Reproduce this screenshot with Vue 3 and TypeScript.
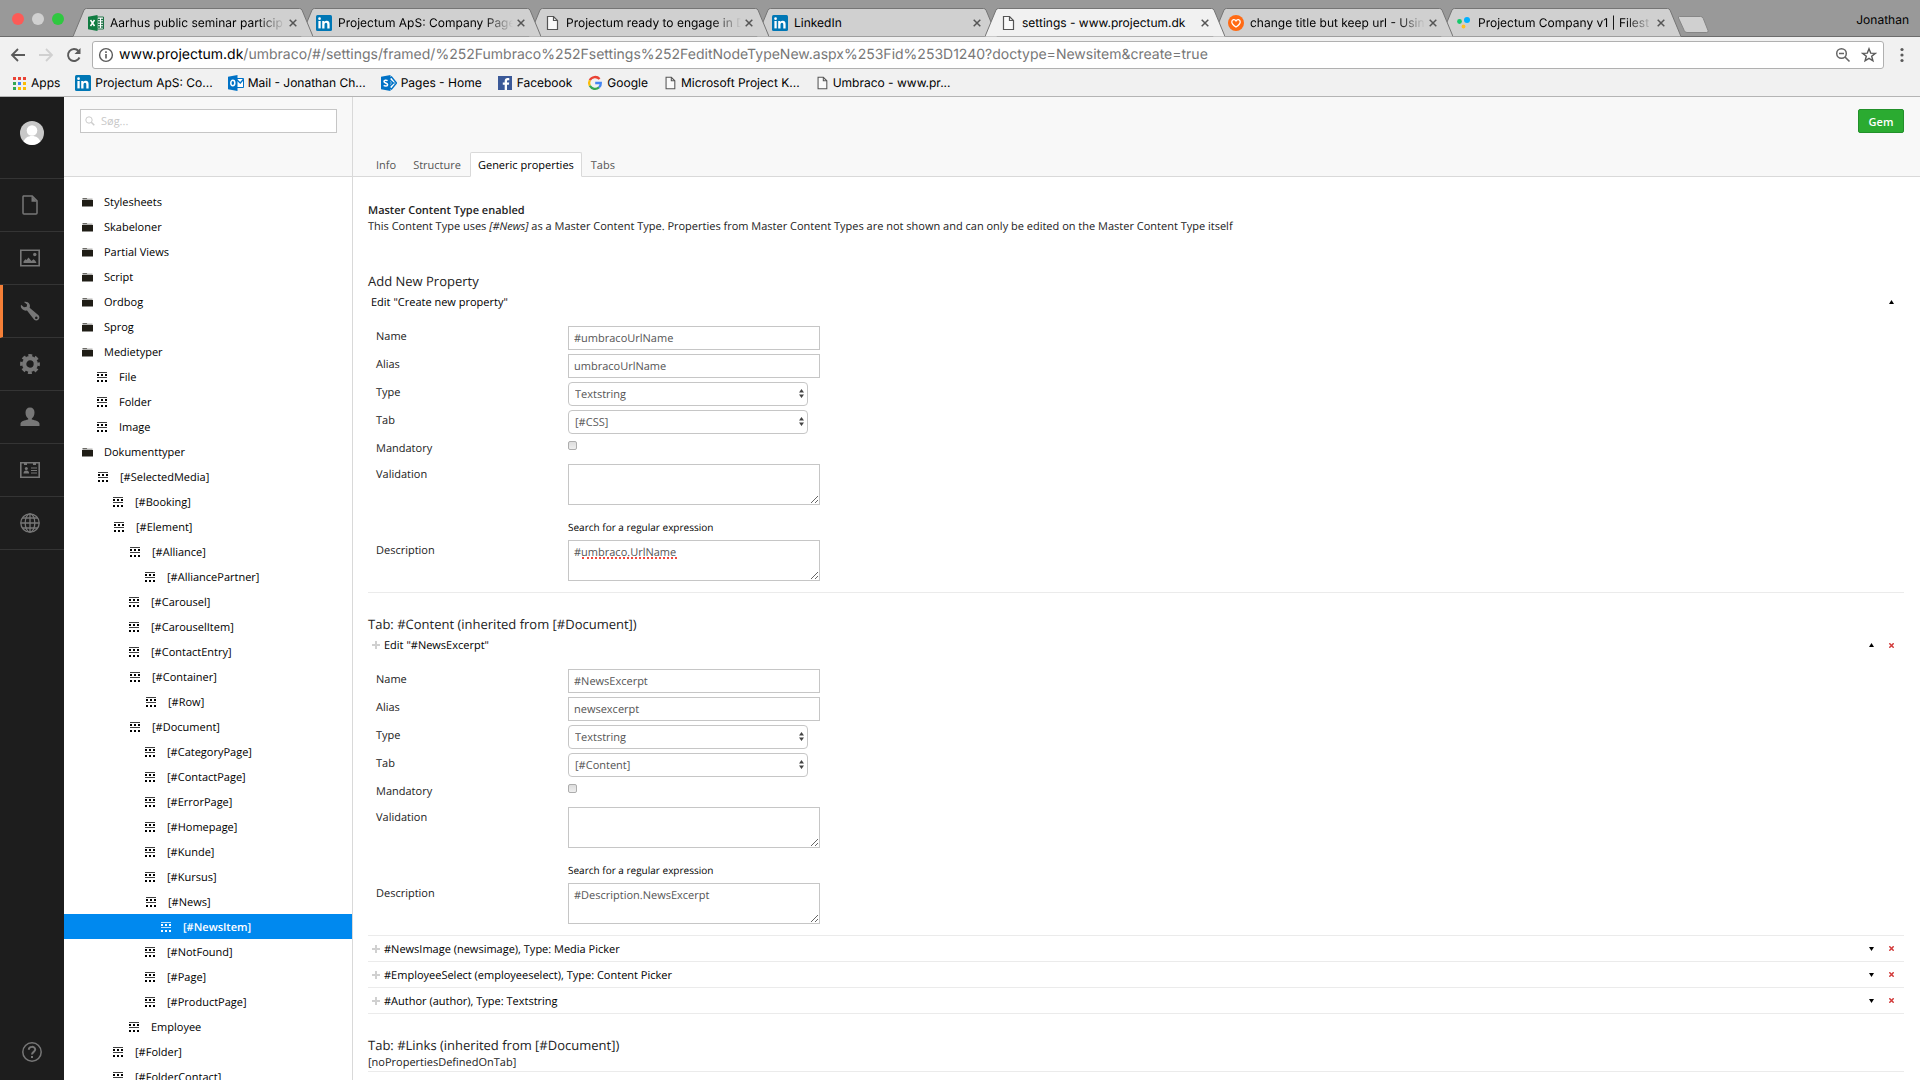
<script setup lang="ts">
import { ref } from 'vue'

type FavIcon = 'excel' | 'linkedin' | 'page' | 'heart' | 'dots' | 'outlook' | 'sharepoint' | 'facebook' | 'google' | 'apps'

interface BrowserTab { title: string; icon: FavIcon; active?: boolean; fade?: boolean }
interface Bookmark { title: string; icon: FavIcon }
interface TreeNode { label: string; indent: number; folder?: boolean; active?: boolean }
interface PropertyForm {
  id: string
  name: string
  alias: string
  type: string
  tab: string
  description: string
}

const browserTabs: BrowserTab[] = [
  { title: 'Aarhus public seminar particip', icon: 'excel', fade: true },
  { title: 'Projectum ApS: Company Page', icon: 'linkedin', fade: true },
  { title: 'Projectum ready to engage in D', icon: 'page', fade: true },
  { title: 'LinkedIn', icon: 'linkedin' },
  { title: 'settings - www.projectum.dk', icon: 'page', active: true },
  { title: 'change title but keep url - Usin', icon: 'heart', fade: true },
  { title: 'Projectum Company v1 | Filest', icon: 'dots', fade: true },
]

const bookmarks: Bookmark[] = [
  { title: 'Apps', icon: 'apps' },
  { title: 'Projectum ApS: Co...', icon: 'linkedin' },
  { title: 'Mail - Jonathan Ch...', icon: 'outlook' },
  { title: 'Pages - Home', icon: 'sharepoint' },
  { title: 'Facebook', icon: 'facebook' },
  { title: 'Google', icon: 'google' },
  { title: 'Microsoft Project K...', icon: 'page' },
  { title: 'Umbraco - www.pr...', icon: 'page' },
]

const sections = ['content', 'media', 'settings', 'developer', 'users', 'members', 'translation']

const tree: TreeNode[] = [
  { label: 'Stylesheets', indent: 18, folder: true },
  { label: 'Skabeloner', indent: 18, folder: true },
  { label: 'Partial Views', indent: 18, folder: true },
  { label: 'Script', indent: 18, folder: true },
  { label: 'Ordbog', indent: 18, folder: true },
  { label: 'Sprog', indent: 18, folder: true },
  { label: 'Medietyper', indent: 18, folder: true },
  { label: 'File', indent: 33 },
  { label: 'Folder', indent: 33 },
  { label: 'Image', indent: 33 },
  { label: 'Dokumenttyper', indent: 18, folder: true },
  { label: '[#SelectedMedia]', indent: 34 },
  { label: '[#Booking]', indent: 49 },
  { label: '[#Element]', indent: 50 },
  { label: '[#Alliance]', indent: 66 },
  { label: '[#AlliancePartner]', indent: 81 },
  { label: '[#Carousel]', indent: 65 },
  { label: '[#CarouselItem]', indent: 65 },
  { label: '[#ContactEntry]', indent: 65 },
  { label: '[#Container]', indent: 66 },
  { label: '[#Row]', indent: 82 },
  { label: '[#Document]', indent: 66 },
  { label: '[#CategoryPage]', indent: 81 },
  { label: '[#ContactPage]', indent: 81 },
  { label: '[#ErrorPage]', indent: 81 },
  { label: '[#Homepage]', indent: 81 },
  { label: '[#Kunde]', indent: 81 },
  { label: '[#Kursus]', indent: 81 },
  { label: '[#News]', indent: 82 },
  { label: '[#NewsItem]', indent: 97, active: true },
  { label: '[#NotFound]', indent: 81 },
  { label: '[#Page]', indent: 81 },
  { label: '[#ProductPage]', indent: 81 },
  { label: 'Employee', indent: 65 },
  { label: '[#Folder]', indent: 49 },
  { label: '[#FolderContact]', indent: 49 },
]

const editorTabs = ['Info', 'Structure', 'Generic properties', 'Tabs']
const activeTab = ref('Generic properties')

const forms = ref<PropertyForm[]>([
  { id: 'new', name: '#umbracoUrlName', alias: 'umbracoUrlName', type: 'Textstring', tab: '[#CSS]', description: '#umbraco.UrlName' },
  { id: 'excerpt', name: '#NewsExcerpt', alias: 'newsexcerpt', type: 'Textstring', tab: '[#Content]', description: '#Description.NewsExcerpt' },
])

const collapsed = [
  '#NewsImage (newsimage), Type: Media Picker',
  '#EmployeeSelect (employeeselect), Type: Content Picker',
  '#Author (author), Type: Textstring',
]

const host = 'www.projectum.dk'
const path = ref('/umbraco/#/settings/framed/%252Fumbraco%252Fsettings%252FeditNodeTypeNew.aspx%253Fid%253D1240?doctype=Newsitem&create=true')
const search = ref('')
</script>

<template>
  <div class="window">
    <svg class="defs" aria-hidden="true">
      <symbol id="i-excel" viewBox="0 0 16 16">
        <path d="M9 2h6.500v12H9z" fill="#fff" stroke="#1e7145" />
        <path d="M10 4.500h2M13 4.500h2M10 7h2M13 7h2M10 9.500h2M13 9.500h2M10 12h2M13 12h2" stroke="#1e7145" stroke-width="1.300" />
        <path d="M0 1.800 9.500 0v16L0 14.200z" fill="#107c41" />
        <path d="M2.500 5l4 6M6.500 5l-4 6" stroke="#fff" stroke-width="1.500" />
      </symbol>
      <symbol id="i-linkedin" viewBox="0 0 16 16">
        <rect width="16" height="16" rx="1.500" fill="#0077b5" />
        <path d="M2.400 6h2.300v7.400H2.400z" fill="#fff" />
        <circle cx="3.550" cy="3.700" r="1.350" fill="#fff" />
        <path d="M6.200 6h2.200v1c.5-.8 1.300-1.200 2.300-1.200 2.200 0 2.900 1.400 2.900 3.500v4.100h-2.300V9.800c0-1.200-.3-2-1.300-2s-1.500.8-1.500 2v3.600H6.200z" fill="#fff" />
      </symbol>
      <symbol id="i-page" viewBox="0 0 16 16">
        <path d="M3.500 1.500h6l4 4v9h-10z" fill="#fafafa" stroke="#555" stroke-width="1.200" />
        <path d="M9.500 1.500v4h4" fill="none" stroke="#555" stroke-width="1.200" />
      </symbol>
      <symbol id="i-heart" viewBox="0 0 16 16">
        <circle cx="8" cy="8" r="8" fill="#ff6a13" />
        <path d="M8 12C4.800 9.800 3.800 8.500 3.800 6.900c0-2.500 3-3 4.200-1 1.200-2 4.200-1.500 4.200 1C12.200 8.500 11.200 9.800 8 12z" fill="none" stroke="#fff" stroke-width="1.300" />
      </symbol>
      <symbol id="i-dots" viewBox="0 0 16 16">
        <circle cx="11" cy="5" r="3" fill="#00b0ff" />
        <circle cx="3.500" cy="6.500" r="2.400" fill="#14c96b" />
        <circle cx="7.500" cy="11.500" r="1.900" fill="#ffc021" />
      </symbol>
      <symbol id="i-outlook" viewBox="0 0 16 16">
        <path d="M8 3.500h7.500v9H8z" fill="#fff" stroke="#0072c6" />
        <path d="M8.500 4.500l3.800 3.500 3.200-3.800" fill="none" stroke="#0072c6" stroke-width="1.400" />
        <path d="M0 1.800 9.500 0v16L0 14.200z" fill="#0072c6" />
        <ellipse cx="4.800" cy="8" rx="2" ry="2.700" fill="none" stroke="#fff" stroke-width="1.500" />
      </symbol>
      <symbol id="i-sharepoint" viewBox="0 0 16 16">
        <path d="M8 3.500l2.500-1.500L15.500 8l-5 6L8 12.500" fill="#fff" stroke="#0072c6" stroke-width="1.400" />
        <path d="M9 5l3.500 3L9 11M9 8h5" fill="none" stroke="#0072c6" stroke-width="1.200" />
        <path d="M0 1.800 9.500 0v16L0 14.200z" fill="#0072c6" />
        <path d="M6.600 5.600C5.200 4.800 3 5 3 6.500S6.600 8 6.600 9.700 4 11.300 2.700 10.400" fill="none" stroke="#fff" stroke-width="1.500" />
      </symbol>
      <symbol id="i-facebook" viewBox="0 0 16 16">
        <rect x="1" y="1" width="14" height="14" fill="#3b5998" />
        <path d="M10 15V9.700h1.900l.3-2.200H10V6.300c0-.7.300-1.100 1.100-1.100h1.200V3.200c-.3 0-.9-.1-1.700-.1-1.800 0-2.900 1-2.900 2.900v1.500H5.800v2.200h1.900V15z" fill="#fff" />
      </symbol>
      <symbol id="i-google" viewBox="0 0 16 16">
        <path d="M12.600 4A6 6 0 0 0 2.800 5.200" fill="none" stroke="#ea4335" stroke-width="2.300" />
        <path d="M2.800 5.200a6 6 0 0 0 0 5.600" fill="none" stroke="#fbbc05" stroke-width="2.300" />
        <path d="M2.800 10.800a6 6 0 0 0 9.200 1.600" fill="none" stroke="#34a853" stroke-width="2.300" />
        <path d="M12 12.400A5.500 5.500 0 0 0 13.800 8H8.200" fill="none" stroke="#4285f4" stroke-width="2.300" />
      </symbol>
      <symbol id="i-apps" viewBox="0 0 16 16">
        <path d="M2 2h3v3H2zM7 2h3v3H7zM12 2h3v3h-3z" fill="#ea4335" />
        <path d="M2 7h3v3H2zM2 12h3v3H2z" fill="#34a853" />
        <path d="M7 7h3v3H7z" fill="#4285f4" />
        <path d="M12 7h3v3h-3zM7 12h3v3H7zM12 12h3v3h-3z" fill="#fbbc05" />
      </symbol>
      <symbol id="i-content" viewBox="0 0 20 20">
        <path d="M3.500 1h8.700L17 5.800V18a1 1 0 0 1-1 1H4a1 1 0 0 1-1-1V2a1 1 0 0 1 .5-1z" fill="none" stroke="currentColor" stroke-width="1.500" />
        <path d="M11.500 1v5.800H17z" fill="currentColor" />
      </symbol>
      <symbol id="i-media" viewBox="0 0 20 20">
        <path d="M.8 2.300h18.400v15.400H.8z" fill="none" stroke="currentColor" stroke-width="1.600" />
        <path d="M3.500 15v-1.500l1.800-2.300 1.200.8 2-2.500 3 3.500 2-1.800 1.800 1.500 1.200 2.300z" fill="currentColor" />
        <circle cx="14.800" cy="6.500" r="1.700" fill="currentColor" />
      </symbol>
      <symbol id="i-settings" viewBox="0 0 20 20">
        <path fill-rule="evenodd" d="M4 1C6 .4 8.300 1 9.400 2.900c.7 1.300.7 2.700.2 3.900l8.600 7.300c1.500 1.300 1.500 3.200.3 4.500s-3.300 1.300-4.500-.2L7 9.500c-1.500.4-3.300 0-4.600-1.200C1 7 .5 5.300 1 3.700l3 2.600 2.700-.6.400-2.200zM16.300 15.500a1.300 1.300 0 1 0 .01 0z" fill="currentColor" />
      </symbol>
      <symbol id="i-developer" viewBox="0 0 20 20">
        <circle cx="10" cy="10" r="5.800" fill="none" stroke="currentColor" stroke-width="4.200" />
        <circle cx="10" cy="10" r="8.600" fill="none" stroke="currentColor" stroke-width="2.600" stroke-dasharray="3.900 2.855" stroke-dashoffset="1.950" />
      </symbol>
      <symbol id="i-users" viewBox="0 0 20 20">
        <path d="M10 .5c3 0 4.500 2 4.500 5 0 2.500-1.200 5.200-2.700 6.100v1c3.500.7 7.700 2 7.700 4.200V19H.5v-2.200c0-2.200 4.200-3.500 7.700-4.200v-1C6.700 10.700 5.500 8 5.500 5.500c0-3 1.500-5 4.500-5z" fill="currentColor" />
      </symbol>
      <symbol id="i-members" viewBox="0 0 20 20">
        <path d="M.8 2.800h18.400v14.400H.8z" fill="none" stroke="currentColor" stroke-width="1.600" />
        <path d="M4 2h3v3H4zM13 2h3v3h-3z" fill="currentColor" />
        <path d="M11 8h6M11 10.500h6M11 13h6" stroke="currentColor" stroke-width="1.200" />
        <circle cx="6.300" cy="8.500" r="1.500" fill="currentColor" />
        <path d="M3.500 13.600c0-2 1-3 2.800-3s2.800 1 2.800 3z" fill="currentColor" />
      </symbol>
      <symbol id="i-translation" viewBox="0 0 20 20">
        <g fill="none" stroke="currentColor" stroke-width="1.300">
          <circle cx="10" cy="10" r="9.200" />
          <ellipse cx="10" cy="10" rx="4.800" ry="9.200" />
          <path d="M10 .8v18.400M.8 10h18.400M2.300 5h15.400M2.300 15h15.400" />
        </g>
      </symbol>
      <symbol id="i-folder" viewBox="0 0 11 10">
        <path d="M0 3h11v6.500H0z" fill="#1f1d16" />
        <path d="M.5 2.400V1h4.200l.6.700h5.200v.7z" fill="#6b6a66" />
      </symbol>
      <symbol id="i-doctype" viewBox="0 0 10 10">
        <path d="M0 .5h10M0 5.500h10" stroke="currentColor" opacity=".75" />
        <path d="M0 2h2v2H0zM4 2h2v2H4zM8 2h2v2H8zM0 8h2v2H0zM4 8h2v2H4zM8 8h2v2H8z" fill="currentColor" />
      </symbol>
      <symbol id="i-plus" viewBox="0 0 8 8"><path d="M4 0v8M0 4h8" stroke="#d0d0d0" stroke-width="2" /></symbol>
      <symbol id="i-up" viewBox="0 0 5 4"><path d="M2.500 0L5 4H0z" fill="#000" /></symbol>
      <symbol id="i-down" viewBox="0 0 5 4"><path d="M0 0h5L2.500 4z" fill="#000" /></symbol>
      <symbol id="i-cross" viewBox="0 0 5 5"><path d="M.3.300l4.400 4.400M4.700.3L.3 4.700" stroke="#d23a3a" stroke-width="1.500" /></symbol>
      <symbol id="i-close" viewBox="0 0 8 8"><path d="M.7.700l6.600 6.600M7.300.7L.7 7.300" stroke="#555" stroke-width="1.500" /></symbol>
    </svg>

    <header class="chrome">
      <div class="strip">
        <div class="lights"><i class="red"></i><i class="grey"></i><i class="green"></i></div>
        <div class="tabs">
          <div
            v-for="(t, i) in browserTabs"
            :key="i"
            class="tab"
            :class="{ active: t.active, fade: t.fade }"
            :style="{ zIndex: t.active ? 20 : 10 - i }"
          >
            <svg class="shape" viewBox="0 0 240 29" preserveAspectRatio="none" aria-hidden="true">
              <path d="M0 28.500 11 2q.8-1.500 2.500-1.500h213q1.700 0 2.500 1.500L240 28.500" />
            </svg>
            <svg class="fav"><use :href="'#i-' + t.icon" /></svg>
            <a href="#" class="title">{{ t.title }}</a>
            <button class="close" aria-label="Close tab"><svg><use href="#i-close" /></svg></button>
          </div>
          <button class="newtab" aria-label="New tab">
            <svg viewBox="0 0 34 17"><path d="M2.500.5h21q2 0 2.700 1.800L31 14.500q.6 2-1.200 2H10q-2 0-2.700-1.800L1.500 2Q1 .5 2.500.5z" fill="#d0d0d0" stroke="#868686" /></svg>
          </button>
        </div>
        <span class="profile">Jonathan</span>
      </div>

      <div class="toolbar">
        <button aria-label="Back"><svg viewBox="0 0 16 16"><path d="M15 8H2M8 2L2 8l6 6" fill="none" stroke="#5a5a5a" stroke-width="1.800" /></svg></button>
        <button aria-label="Forward"><svg viewBox="0 0 16 16"><path d="M1 8h13M8 2l6 6-6 6" fill="none" stroke="#d0d0d0" stroke-width="1.800" /></svg></button>
        <button aria-label="Reload"><svg viewBox="0 0 16 16"><path d="M13.500 10.500A6 6 0 1 1 12.500 4" fill="none" stroke="#5a5a5a" stroke-width="1.900" /><path d="M14.500 1v6h-6z" fill="#5a5a5a" /></svg></button>
        <div class="omnibox">
          <svg class="info" viewBox="0 0 16 16"><circle cx="8" cy="8" r="6.400" fill="none" stroke="#5a5a5a" stroke-width="1.400" /><path d="M8 7v4.500M8 4.300v1.600" stroke="#5a5a5a" stroke-width="1.600" /></svg>
          <label for="address">{{ host }}</label>
          <input id="address" v-model="path" type="text" />
          <button aria-label="Zoom"><svg viewBox="0 0 16 16"><circle cx="6.500" cy="6.500" r="4.800" fill="none" stroke="#666" stroke-width="1.500" /><path d="M10 10l4.500 4.500M4 6.500h5" stroke="#666" stroke-width="1.600" /></svg></button>
          <button aria-label="Bookmark"><svg viewBox="0 0 16 16"><path d="M8 1.800l1.700 4.300 4.600.3-3.600 2.900 1.200 4.500L8 11.300l-3.900 2.500 1.200-4.500-3.600-2.900 4.600-.3z" fill="none" stroke="#5a5a5a" stroke-width="1.400" /></svg></button>
        </div>
        <button class="more" aria-label="Menu"><svg viewBox="0 0 16 16"><g fill="#5a5a5a"><circle cx="8" cy="2.500" r="1.600" /><circle cx="8" cy="8" r="1.600" /><circle cx="8" cy="13.500" r="1.600" /></g></svg></button>
      </div>

      <nav class="bookmarks">
        <a v-for="b in bookmarks" :key="b.title" href="#" :class="{ small: b.icon === 'page' }"><svg class="fav"><use :href="'#i-' + b.icon" /></svg>{{ b.title }}</a>
      </nav>
    </header>

    <div class="app">
      <nav class="sections">
        <button class="avatar" aria-label="Profile">
          <svg viewBox="0 0 24 24"><circle cx="12" cy="12" r="12" fill="#c8c8c8" /><circle cx="12" cy="9.500" r="5.300" fill="#fff" /><path d="M3.600 20.500c1.400-3.400 4-5.500 8.400-5.500s7 2.100 8.400 5.500A12 12 0 0 1 12 24a12 12 0 0 1-8.400-3.500z" fill="#fff" /></svg>
        </button>
        <a v-for="s in sections" :key="s" href="#" :aria-label="s" :class="{ current: s === 'settings' }"><svg><use :href="'#i-' + s" /></svg></a>
        <button class="help" aria-label="Help">
          <svg viewBox="0 0 20 20" fill="none" stroke="currentColor"><circle cx="10" cy="10" r="9.200" stroke-width="1.500" /><path d="M6.800 7.800C6.800 3.900 13.200 4 13.200 7.500c0 2.400-3.200 2.300-3.200 5M10 14v2" stroke-width="2" /></svg>
        </button>
      </nav>

      <aside class="tree">
        <div class="searchbar">
          <label class="search">
            <svg viewBox="0 0 10 10"><circle cx="4" cy="4" r="3.200" fill="none" stroke="#ccc" /><path d="M6.300 6.300l3 3" stroke="#ccc" stroke-width="1.500" /></svg>
            <input v-model="search" type="text" placeholder="Søg..." aria-label="Søg" />
          </label>
        </div>
        <ul>
          <li v-for="n in tree" :key="n.label" :class="{ active: n.active }">
            <a href="#" :style="{ paddingLeft: n.indent + 'px' }"><svg :class="{ doc: !n.folder }"><use :href="n.folder ? '#i-folder' : '#i-doctype'" /></svg>{{ n.label }}</a>
          </li>
        </ul>
      </aside>

      <main class="editor">
        <div class="head">
          <button class="save">Gem</button>
          <nav class="edtabs">
            <a v-for="t in editorTabs" :key="t" href="#" :class="{ on: t === activeTab }" @click.prevent="activeTab = t">{{ t }}</a>
          </nav>
        </div>

        <div class="body">
          <h2>Master Content Type enabled</h2>
          <p class="note">This Content Type uses <em>[#News]</em> as a Master Content Type. Properties from Master Content Types are not shown and can only be edited on the Master Content Type itself</p>

          <section v-for="f in forms" :key="f.id">
            <h3>{{ f.id === 'new' ? 'Add New Property' : 'Tab: #Content (inherited from [#Document])' }}</h3>
            <div class="bar edit" :class="{ plain: f.id === 'new' }">
              <svg v-if="f.id !== 'new'" class="plus"><use href="#i-plus" /></svg>
              <a href="#">{{ f.id === 'new' ? 'Edit "Create new property"' : 'Edit "#NewsExcerpt"' }}</a>
              <button aria-label="Collapse"><svg class="arrow"><use href="#i-up" /></svg></button>
              <button v-if="f.id !== 'new'" aria-label="Delete"><svg class="cross"><use href="#i-cross" /></svg></button>
            </div>
            <form @submit.prevent>
              <div class="row"><label :for="f.id + '-name'">Name</label><input :id="f.id + '-name'" v-model="f.name" type="text" /></div>
              <div class="row"><label :for="f.id + '-alias'">Alias</label><input :id="f.id + '-alias'" v-model="f.alias" type="text" /></div>
              <div class="row">
                <label :for="f.id + '-type'">Type</label>
                <div class="select"><select :id="f.id + '-type'" v-model="f.type"><option>Textstring</option></select><svg viewBox="0 0 5 9"><path d="M2.500 0L5 3.500H0zM0 5.500h5L2.500 9z" /></svg></div>
              </div>
              <div class="row">
                <label :for="f.id + '-tab'">Tab</label>
                <div class="select"><select :id="f.id + '-tab'" v-model="f.tab"><option>[#CSS]</option><option>[#Content]</option></select><svg viewBox="0 0 5 9"><path d="M2.500 0L5 3.500H0zM0 5.500h5L2.500 9z" /></svg></div>
              </div>
              <div class="row check"><label :for="f.id + '-mandatory'">Mandatory</label><input :id="f.id + '-mandatory'" type="checkbox" /></div>
              <div class="row">
                <label :for="f.id + '-validation'">Validation</label>
                <div class="stack"><textarea :id="f.id + '-validation'"></textarea><a href="#">Search for a regular expression</a></div>
              </div>
              <div class="row">
                <label :for="f.id + '-description'">Description</label>
                <div class="area"><textarea :id="f.id + '-description'" v-model="f.description" spellcheck="false"></textarea><i v-if="f.id === 'new'" class="typo"></i></div>
              </div>
            </form>
          </section>

          <div v-for="c in collapsed" :key="c" class="bar line">
            <svg class="plus"><use href="#i-plus" /></svg>
            <a href="#">{{ c }}</a>
            <button aria-label="Expand"><svg class="arrow"><use href="#i-down" /></svg></button>
            <button aria-label="Delete"><svg class="cross"><use href="#i-cross" /></svg></button>
          </div>

          <h3>Tab: #Links (inherited from [#Document])</h3>
          <p class="empty">[noPropertiesDefinedOnTab]</p>
        </div>
      </main>
    </div>
  </div>
</template>

<style>
html, body { margin: 0; height: 100%; overflow: hidden; }
</style>

<style scoped>
* { box-sizing: border-box; }
.window { display: flex; flex-direction: column; height: 100vh; overflow: hidden; background: #fff; font-family: "Open Sans", "Noto Sans", sans-serif; font-size: 11px; text-rendering: geometricPrecision; color: #222; }
.defs { position: absolute; width: 0; height: 0; }
a { color: inherit; text-decoration: none; }
button { padding: 0; border: 0; background: none; color: inherit; font: inherit; }
input, select, textarea { text-rendering: inherit; }
svg { display: block; flex: none; }

/* browser chrome */
.chrome { flex: none; background: #f1f1f1; border-bottom: 1px solid #b4b4b4; font-family: Inter, Roboto, sans-serif; font-size: 12px; color: #000; }
.strip { display: flex; height: 37px; background: #999; border-bottom: 1px solid #6c6c6c; }
.lights { display: flex; flex: none; gap: 8px; width: 73px; padding: 13px 0 0 12px; }
.lights i { width: 12px; height: 12px; border-radius: 50%; }
.red { background: #fc5b57; }
.grey { background: #d0d0d0; }
.green { background: #2fc840; }
.tabs { display: flex; flex: 1; padding-top: 8px; }
.tab { position: relative; display: flex; flex: none; align-items: center; width: 240px; height: 29px; margin-right: -12px; padding: 0 16px 0 15px; }
.shape { position: absolute; inset: 0; width: 100%; height: 100%; fill: #d0d0d0; stroke: #757575; }
.active .shape { fill: #f1f1f1; }
.fav { position: relative; width: 16px; height: 16px; }
.title { position: relative; flex: 1; min-width: 0; margin: 0 4px 0 6px; white-space: nowrap; }
.fade .title { mask-image: linear-gradient(to right, #000 84%, transparent 100%); }
.close { position: relative; width: 8px; height: 8px; }
.close svg { width: 8px; height: 8px; }
.newtab { margin: 8px 0 0 8px; width: 34px; height: 17px; }
.newtab svg { width: 34px; height: 17px; }
.profile { padding: 12px 11px 0 0; line-height: 16px; }
.toolbar { display: flex; align-items: center; gap: 12px; padding: 4px 10px 0 10px; }
.toolbar button, .toolbar button svg { width: 16px; height: 16px; }
.omnibox { display: flex; flex: 1; align-items: center; height: 28px; margin-left: -2px; padding: 0 6px 1px 5px; background: #fff; border: 1px solid #b0b0b0; border-radius: 3px; font-size: 14px; }
.info { width: 16px; height: 16px; margin-right: 5px; }
.omnibox input { flex: 1; min-width: 0; height: 24px; padding: 0; border: 0; outline: 0; font: inherit; color: #777; }
.omnibox button { margin-left: 10px; }
.more { margin-left: -2px; }
.bookmarks { display: flex; gap: 15px; height: 27px; padding-left: 11px; }
.bookmarks a { display: flex; gap: 4px; align-items: center; }
.bookmarks .small .fav { width: 14px; height: 14px; }

/* application sections */
.app { display: flex; flex: 1; min-height: 0; }
.sections { display: flex; flex: none; flex-direction: column; width: 64px; background: #1d1d1d; color: #777; }
.sections a, .avatar { display: flex; flex: none; align-items: center; justify-content: center; height: 53px; border-bottom: 1px solid #343434; }
.sections a { padding: 0 4px 1px 0; }
.sections a svg, .help svg { width: 20px; height: 20px; }
.sections a.current { padding-right: 7px; border-left: 3px solid #f57f37; }
.sections .avatar { height: 82px; padding-bottom: 9px; }
.avatar svg { width: 24px; height: 24px; }
.help { align-self: center; margin: auto 0 18px; }

/* tree */
.tree { display: flex; flex: none; flex-direction: column; width: 289px; border-right: 1px solid #d9d9d9; color: #000; }
.searchbar { flex: none; height: 80px; padding: 12px 15px 0 16px; background: #f8f8f8; border-bottom: 1px solid #d9d9d9; }
.search { display: flex; gap: 4px; align-items: center; height: 24px; padding: 0 4px; background: #fff; border: 1px solid #c6c6c6; }
.search svg { width: 10px; height: 10px; }
.search input { flex: 1; min-width: 0; border: 0; outline: 0; font: inherit; }
.search input::placeholder { color: #c8c8c8; }
ul { flex: 1; min-height: 0; margin: 0; padding: 12px 0 0; overflow: hidden; list-style: none; }
li a { display: flex; gap: 11px; align-items: center; height: 25px; line-height: 15px; padding-top: 1px; }
li svg { width: 11px; height: 10px; margin-bottom: 1px; }
li svg.doc { width: 10px; margin-right: 1px; }
li.active { background: #0089ef; color: #fff; font-weight: 600; }

/* editor */
.editor { display: flex; flex: 1; flex-direction: column; min-width: 0; }
.head { display: flex; flex: none; flex-direction: column; justify-content: space-between; height: 80px; padding: 12px 16px 0 15px; background: #f8f8f8; border-bottom: 1px solid #d9d9d9; }
.save { align-self: flex-end; width: 46px; height: 24px; background: #2bab31; border: 1px solid #22902a; border-radius: 2px; color: #fff; font-weight: 600; }
.edtabs { display: flex; gap: 1px; margin-bottom: -1px; color: #555; }
.edtabs a { height: 25px; padding: 0 7px; border: 1px solid transparent; line-height: 25px; }
.edtabs a.on { background: #fff; border-color: #d9d9d9 #d9d9d9 #fff; border-radius: 2px 2px 0 0; color: #000; }
.body { flex: 1; min-height: 0; padding: 26px 16px 0 15px; overflow: hidden; }
h2, p { margin: 0; font-size: 11px; line-height: 16px; }
h2 { font-weight: 600; }
.note { margin-bottom: 36px; }
h3 { margin: 21px 0 0; font-size: 13px; font-weight: 400; line-height: 20px; }
.note + section h3 { margin-top: 0; }
.bar { display: flex; align-items: center; height: 26px; padding: 0 10px 0 4px; border-bottom: 1px solid #ebebeb; color: #000; }
.bar.edit { height: 22px; border: 0; }
.bar.plain { padding-left: 3px; }
.bar a { flex: 1; }
.bar.line a { padding-top: 1px; }
.plus { width: 8px; height: 8px; margin-right: 4px; }
.bar button { margin-left: 15px; }
.arrow { width: 5px; height: 4px; }
.cross { width: 5px; height: 5px; }
form { display: flex; flex-direction: column; gap: 4px; padding: 13px 0 11px 8px; border-bottom: 1px solid #ebebeb; }
.row { display: flex; align-items: flex-start; }
.row label { width: 192px; line-height: 22px; }
.row input[type="text"], textarea { display: block; width: 252px; height: 24px; margin: 0; padding: 0 5px; border: 1px solid #c6c6c6; border-radius: 0; outline: 0; background: #fff; color: #555; font: inherit; }
textarea { height: 41px; padding: 4px 5px; line-height: 16px; resize: both; }
.select { position: relative; width: 240px; }
.select select { display: block; width: 100%; height: 24px; padding: 0 6px; appearance: none; background: #fff; border: 1px solid #c6c6c6; border-radius: 4px; color: #555; font: inherit; }
.select svg { position: absolute; top: 7px; right: 4px; width: 5px; height: 9px; fill: #444; }
.check { height: 22px; }
.check input { appearance: none; width: 9px; height: 9px; margin: 3px 0 0; background: linear-gradient(#ddd, #eee); border: 1px solid #adadad; border-radius: 2px; }
.stack a { display: block; margin-top: 14px; color: #000; font-size: 10px; line-height: 17px; }
.area { position: relative; }
.typo { position: absolute; top: 17px; left: 14px; width: 95px; border-bottom: 2px dotted #f0483c; pointer-events: none; }
.empty { border-bottom: 1px solid #ebebeb; height: 17px; }
</style>
